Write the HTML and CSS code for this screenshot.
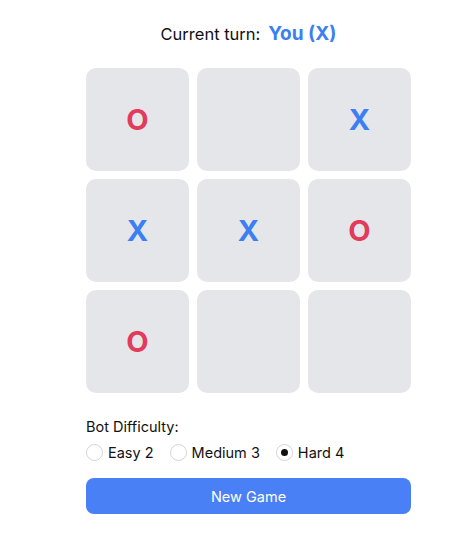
FILE: index.html
```html
<!DOCTYPE html>
<html lang="en">
  <head>
    <meta charset="UTF-8" />
    <meta name="viewport" content="width=device-width, initial-scale=1.0" />
    <title>Tic Tac Toe</title>
    <link rel="stylesheet" href="styles.css">
  </head>
  <body>
    <div class="game">
      <div class="status">
        <span class="status-label">Current turn:</span>
        <span class="status-player">You (X)</span>
      </div>

      <div class="board">
        <button class="cell o">O</button>
        <button class="cell"></button>
        <button class="cell x">X</button>
        <button class="cell x">X</button>
        <button class="cell x">X</button>
        <button class="cell o">O</button>
        <button class="cell o">O</button>
        <button class="cell"></button>
        <button class="cell"></button>
      </div>

      <div class="difficulty">
        <div class="difficulty-title">Bot Difficulty:</div>
        <div class="difficulty-options">
          <label class="option">
            <span class="radio"></span>
            Easy 2
          </label>
          <label class="option">
            <span class="radio"></span>
            Medium 3
          </label>
          <label class="option">
            <span class="radio checked"></span>
            Hard 4
          </label>
        </div>
      </div>

      <button class="new-game">New Game</button>
    </div>
  </body>
</html>
```

FILE: styles.css
```css
body {
  font-family: Inter, "Noto Sans", sans-serif;
  margin: 0;
  background: #ffffff;
  color: #111111;
}

.game {
  width: 325px;
  margin-left: 86px;
  padding-top: 22px;
}

.status {
  display: flex;
  justify-content: center;
  align-items: baseline;
  gap: 8px;
  height: 26px;
}

.status-label {
  font-size: 16.5px;
}

.status-player {
  font-size: 19px;
  font-weight: 700;
  color: #3b7ff2;
}

.board {
  display: grid;
  grid-template-columns: repeat(3, 1fr);
  gap: 8px;
  margin-top: 20px;
}

.cell {
  aspect-ratio: 1;
  border: none;
  border-radius: 10px;
  background: #e5e6ea;
  font-family: inherit;
  font-size: 29px;
  font-weight: 700;
  padding: 0;
}

.cell.x {
  color: #3b7ff2;
}

.cell.o {
  color: #e23b5c;
}

.difficulty {
  margin-top: 25px;
}

.difficulty-title {
  font-size: 14.5px;
}

.difficulty-options {
  display: flex;
  gap: 16px;
  margin-top: 9px;
  font-size: 14.5px;
}

.option {
  display: flex;
  align-items: center;
  gap: 5px;
}

.radio {
  width: 15px;
  height: 15px;
  border: 1px solid #d4d4d8;
  border-radius: 50%;
  display: flex;
  align-items: center;
  justify-content: center;
}

.radio.checked::after {
  content: "";
  width: 7px;
  height: 7px;
  border-radius: 50%;
  background: #111111;
}

.new-game {
  display: block;
  width: 100%;
  height: 36px;
  margin-top: 17px;
  border: none;
  border-radius: 8px;
  background: #4a80f6;
  color: #ffffff;
  font-family: inherit;
  font-size: 14.5px;
}
```
